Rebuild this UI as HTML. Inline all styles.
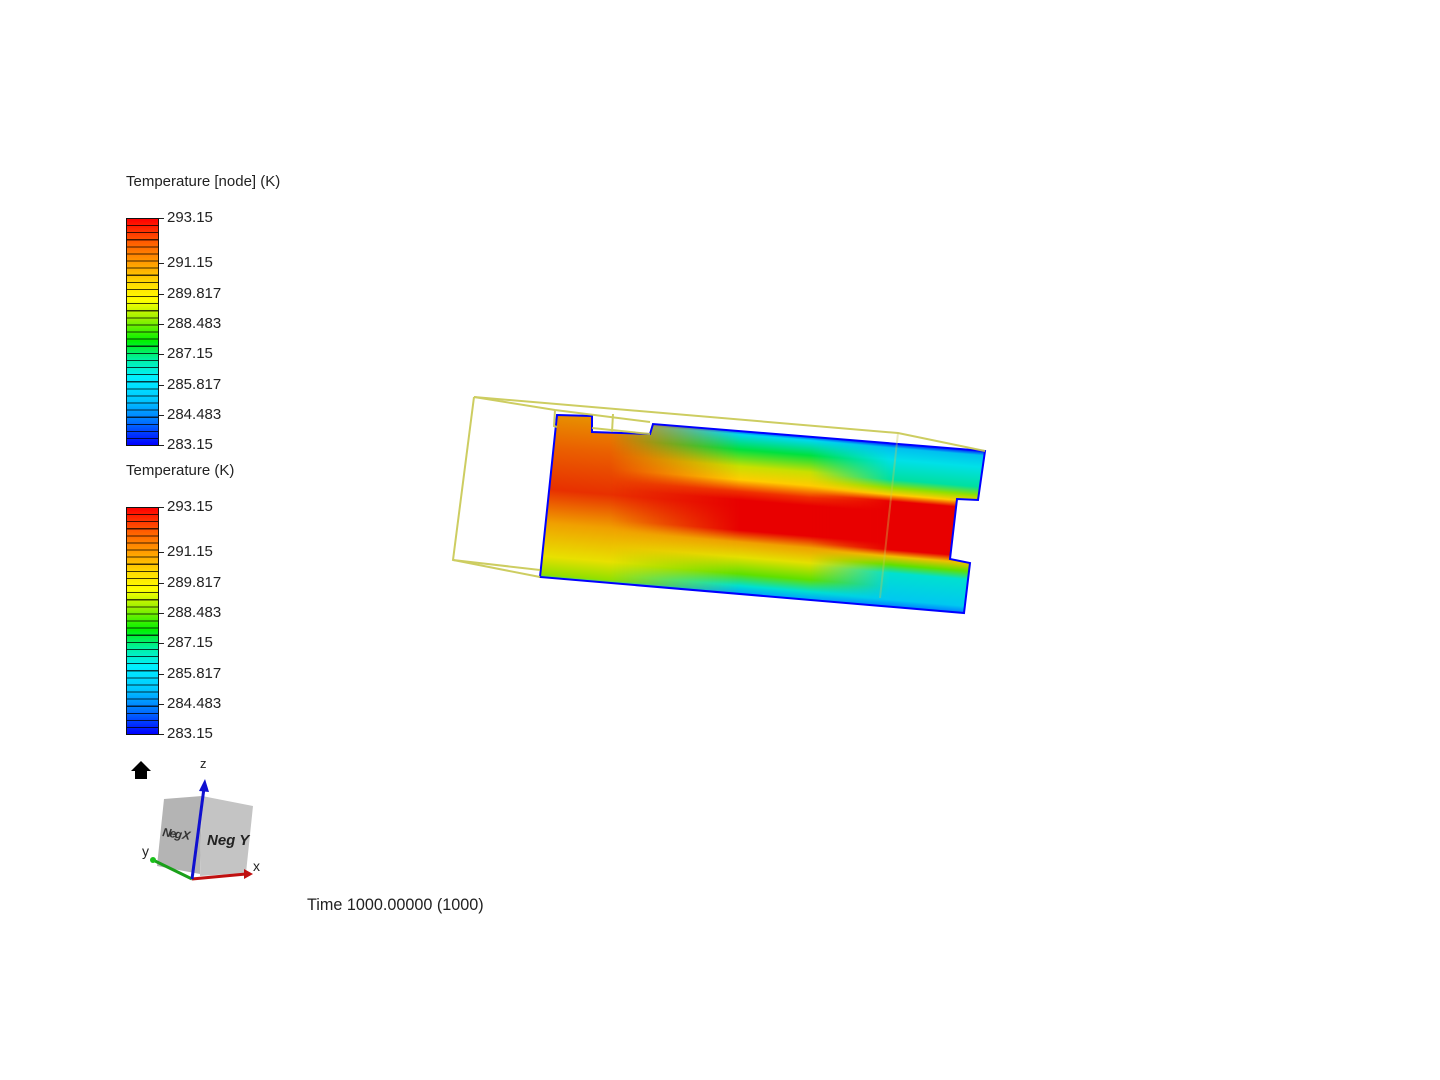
<!DOCTYPE html>
<html><head><meta charset="utf-8"><style>
html,body{margin:0;padding:0;background:#fff;}
body{width:1440px;height:1080px;position:relative;overflow:hidden;font-family:"Liberation Sans",Arial,sans-serif;color:#222;}
.t{position:absolute;font-size:15px;white-space:nowrap;}
.bar{position:absolute;left:126px;width:33px;height:228px;border:1px solid #111;box-sizing:border-box;
background:repeating-linear-gradient(to bottom,transparent 0,transparent 6px,rgba(0,0,0,.75) 6px,rgba(0,0,0,.75) 7.1px),
linear-gradient(to bottom,#f00 0%,#ff5a00 10%,#ffa000 20%,#ffd800 28%,#ffff00 36%,#9cf000 44%,#00f000 54%,#00f0a0 62%,#00f0ff 70%,#00c8ff 80%,#0070ff 90%,#0000ff 100%);}
.tick{position:absolute;left:159px;width:5px;height:1px;background:#222;}
</style></head><body>
<div class="t" style="left:126px;top:173px">Temperature [node] (K)</div>
<div class="bar" style="top:218px"></div>
<div class="t" style="left:167px;top:209px">293.15</div>
<div class="t" style="left:167px;top:254px">291.15</div>
<div class="t" style="left:167px;top:285px">289.817</div>
<div class="t" style="left:167px;top:315px">288.483</div>
<div class="t" style="left:167px;top:345px">287.15</div>
<div class="t" style="left:167px;top:376px">285.817</div>
<div class="t" style="left:167px;top:406px">284.483</div>
<div class="t" style="left:167px;top:436px">283.15</div>
<div class="tick" style="top:218px"></div><div class="tick" style="top:263px"></div><div class="tick" style="top:294px"></div><div class="tick" style="top:324px"></div><div class="tick" style="top:354px"></div><div class="tick" style="top:385px"></div><div class="tick" style="top:415px"></div><div class="tick" style="top:445px"></div>

<div class="t" style="left:126px;top:462px">Temperature (K)</div>
<div class="bar" style="top:507px"></div>
<div class="t" style="left:167px;top:498px">293.15</div>
<div class="t" style="left:167px;top:543px">291.15</div>
<div class="t" style="left:167px;top:574px">289.817</div>
<div class="t" style="left:167px;top:604px">288.483</div>
<div class="t" style="left:167px;top:634px">287.15</div>
<div class="t" style="left:167px;top:665px">285.817</div>
<div class="t" style="left:167px;top:695px">284.483</div>
<div class="t" style="left:167px;top:725px">283.15</div>
<div class="tick" style="top:507px"></div><div class="tick" style="top:552px"></div><div class="tick" style="top:583px"></div><div class="tick" style="top:613px"></div><div class="tick" style="top:643px"></div><div class="tick" style="top:674px"></div><div class="tick" style="top:704px"></div><div class="tick" style="top:734px"></div>

<div class="t" style="left:307px;top:896px;font-size:16.2px">Time 1000.00000 (1000)</div>

<svg width="1440" height="1080" style="position:absolute;left:0;top:0">
<defs>
<linearGradient id="gA" gradientUnits="userSpaceOnUse" x1="760" y1="431" x2="746" y2="598">
<stop offset="0" stop-color="#0000ff"/><stop offset=".03" stop-color="#00d8f0"/><stop offset=".12" stop-color="#00e040"/>
<stop offset=".22" stop-color="#c8e000"/><stop offset=".3" stop-color="#ffcc00"/><stop offset=".37" stop-color="#f03000"/>
<stop offset=".42" stop-color="#e80000"/><stop offset=".6" stop-color="#e80000"/><stop offset=".67" stop-color="#f0a000"/>
<stop offset=".76" stop-color="#e4e000"/><stop offset=".86" stop-color="#60e000"/><stop offset=".93" stop-color="#00e0d0"/>
<stop offset=".98" stop-color="#00a0ff"/><stop offset="1" stop-color="#0000ff"/></linearGradient>
<linearGradient id="gL" gradientUnits="userSpaceOnUse" x1="600" y1="418" x2="586" y2="585">
<stop offset="0" stop-color="#e89000"/><stop offset=".2" stop-color="#ea6000"/><stop offset=".45" stop-color="#e83000"/>
<stop offset=".65" stop-color="#f0a000"/><stop offset=".85" stop-color="#e8e000"/><stop offset=".96" stop-color="#90e000"/>
<stop offset=".985" stop-color="#00d8f0"/><stop offset="1" stop-color="#0000ff"/></linearGradient>
<linearGradient id="gR" gradientUnits="userSpaceOnUse" x1="930" y1="446" x2="916" y2="612">
<stop offset="0" stop-color="#0000ff"/><stop offset=".03" stop-color="#00c0f0"/><stop offset=".1" stop-color="#00e0e8"/>
<stop offset=".22" stop-color="#00e0a0"/><stop offset=".27" stop-color="#90e000"/><stop offset=".31" stop-color="#ffcc00"/>
<stop offset=".35" stop-color="#e80000"/><stop offset=".64" stop-color="#e80000"/><stop offset=".68" stop-color="#f0c000"/>
<stop offset=".73" stop-color="#60e000"/><stop offset=".78" stop-color="#00e0d0"/><stop offset=".94" stop-color="#00c8f0"/>
<stop offset=".98" stop-color="#0080ff"/><stop offset="1" stop-color="#0000ff"/></linearGradient>
<linearGradient id="mL" gradientUnits="userSpaceOnUse" x1="610" y1="0" x2="740" y2="0"><stop offset="0" stop-color="#fff"/><stop offset="1" stop-color="#000"/></linearGradient>
<linearGradient id="mR" gradientUnits="userSpaceOnUse" x1="810" y1="0" x2="890" y2="0"><stop offset="0" stop-color="#000"/><stop offset="1" stop-color="#fff"/></linearGradient>
<mask id="maskL"><rect width="1440" height="1080" fill="url(#mL)"/></mask>
<mask id="maskR"><rect width="1440" height="1080" fill="url(#mR)"/></mask>
<clipPath id="body"><polygon points="557,415 592,416 592,432 650,434 653,424 985,451 978,500 957,499 950,559 970,563 964,613 540,577"/></clipPath>
</defs>
<g clip-path="url(#body)">
<rect x="500" y="380" width="520" height="260" fill="url(#gA)"/>
<rect x="500" y="380" width="520" height="260" fill="url(#gL)" mask="url(#maskL)"/>
<rect x="500" y="380" width="520" height="260" fill="url(#gR)" mask="url(#maskR)"/>
</g>
<polygon points="557,415 592,416 592,432 650,434 653,424 985,451 978,500 957,499 950,559 970,563 964,613 540,577" fill="none" stroke="#0000ff" stroke-width="2"/>
<g fill="none" stroke="#c8c850" stroke-width="2" opacity=".9">
<polyline points="474,397 898,433 985,451"/>
<polyline points="474,397 453,560 540,577"/>
<line x1="453" y1="560" x2="540" y2="570"/>
<line x1="474" y1="397" x2="555" y2="410"/>
<polyline points="555,410 554,426 557,427"/>
<line x1="555" y1="410" x2="650" y2="422"/>
<line x1="592" y1="428" x2="650" y2="434"/>
<line x1="613" y1="414" x2="612" y2="432"/>
<line x1="898" y1="433" x2="880" y2="598" opacity=".4"/>
</g>
<path d="M141,761 L151,771 L147,771 L147,779 L135,779 L135,771 L131,771 Z" fill="#000"/>
<polygon points="164,799 202,796 200,874 157,866" fill="#b4b4b4"/>
<polygon points="202,796 253,806 246,873 200,876" fill="#c4c4c4"/>
<text x="162" y="836" font-family="Liberation Sans" font-style="italic" font-weight="bold" font-size="12" fill="#333" transform="rotate(8 162 836)" textLength="28">Neg X</text>
<text x="207" y="845" font-family="Liberation Sans" font-style="italic" font-weight="bold" font-size="15" fill="#222">Neg Y</text>
<line x1="192" y1="879" x2="153" y2="860" stroke="#1aa01a" stroke-width="3"/>
<circle cx="153" cy="860" r="3" fill="#1ac01a"/>
<line x1="192" y1="879" x2="246" y2="874" stroke="#c01010" stroke-width="3"/>
<polygon points="244,869 253,874 244,879" fill="#c01010"/>
<line x1="192" y1="879" x2="204" y2="788" stroke="#1010d0" stroke-width="3"/>
<polygon points="199,791 205,779 209,792" fill="#1010d0"/>
<text x="142" y="856" font-family="Liberation Sans" font-size="14" fill="#222">y</text>
<text x="253" y="871" font-family="Liberation Sans" font-size="14" fill="#222">x</text>
<text x="200" y="768" font-family="Liberation Sans" font-size="13" fill="#222">z</text>
</svg>
</body></html>
